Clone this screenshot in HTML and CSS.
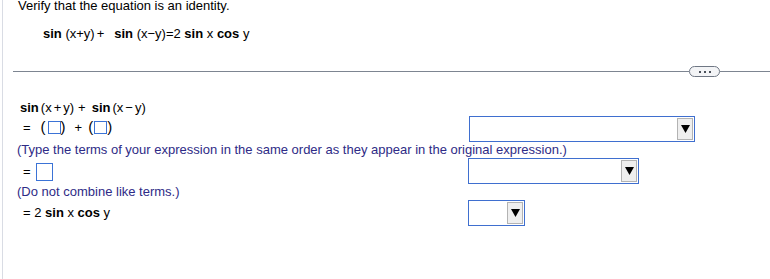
FILE: index.html
```html
<!DOCTYPE html>
<html lang="en">
<head>
<meta charset="utf-8">
<title>Verify identity</title>
<link rel="stylesheet" href="styles.css">
</head>
<body>
<div class="page">
  <p class="prompt">Verify that the equation is an identity.</p>
  <p class="given"><b>sin</b> (x+y)<span class="op-wide">+</span><b>sin</b> (x−y)=2 <b>sin</b> x <b>cos</b> y</p>
  <div class="divider">
    <span class="rule rule-left"></span>
    <span class="more"><i></i><i></i><i></i></span>
    <span class="rule rule-right"></span>
  </div>
  <div class="work">
    <p class="expr"><b>sin</b><span class="sp"></span>(x<span class="op">+</span>y)<span class="op2">+</span><b>sin</b><span class="sp"></span>(x<span class="op">−</span>y)</p>
    <div class="row row-1">
      <div class="math">=<span class="paren p-open">(</span><span class="box box-sm"></span><span class="paren">)</span><span class="plus">+</span><span class="paren p-open2">(</span><span class="box box-sm"></span><span class="paren">)</span></div>
      <div class="select w-lg"><span class="arrow"><svg width="9" height="8" viewBox="0 0 9 8"><polygon points="0,0 9,0 4.5,8" fill="#000"/></svg></span></div>
    </div>
    <p class="note">(Type the terms of your expression in the same order as they appear in the original expression.)</p>
    <div class="row row-2">
      <div class="math">=<span class="box box-md"></span></div>
      <div class="select w-md"><span class="arrow"><svg width="9" height="8" viewBox="0 0 9 8"><polygon points="0,0 9,0 4.5,8" fill="#000"/></svg></span></div>
    </div>
    <p class="note">(Do not combine like terms.)</p>
    <div class="row row-3">
      <div class="math">= 2 <b>sin</b> x <b>cos</b> y</div>
      <div class="select w-sm"><span class="arrow"><svg width="9" height="8" viewBox="0 0 9 8"><polygon points="0,0 9,0 4.5,8" fill="#000"/></svg></span></div>
    </div>
  </div>
</div>
</body>
</html>
```
FILE: styles.css
```css
html, body {
  margin: 0;
  padding: 0;
  background: #fff;
}
body {
  font-family: "Liberation Sans", Arial, sans-serif;
  font-size: 13px;
  line-height: 15px;
  color: #000;
}
p { margin: 0; }
b { font-weight: bold; }

.page {
  margin-left: 2px;
  border-left: 1px solid #d9dce4;
  min-height: 279px;
  overflow: hidden;
}

.prompt {
  line-height: 12px;
  padding-left: 15px;
}

.given {
  margin-top: 14px;
  padding-left: 40px;
  white-space: nowrap;
}
.op-wide {
  margin: 0 10px 0 2px;
}

.divider {
  display: flex;
  align-items: center;
  margin-top: 25px;
  padding-left: 10px;
  height: 11px;
}
.rule {
  height: 1px;
  background: #7d8591;
}
.rule-left { width: 676px; }
.rule-right { flex: 1; }
.more {
  width: 31px;
  height: 11px;
  box-sizing: border-box;
  border: 1px solid #6f7784;
  border-radius: 6px;
  background: #f3f4f6;
  display: flex;
  align-items: center;
  justify-content: center;
  gap: 3px;
}
.more i {
  display: block;
  width: 2px;
  height: 2px;
  background: #4a505a;
}

.work {
  margin-top: 23px;
  padding-left: 14px;
}
.expr {
  padding-left: 3px;
  white-space: nowrap;
}
.sp { display: inline-block; width: 2px; }
.op { margin: 0 2px; }
.op2 { margin: 0 6px 0 4px; }

.row {
  display: grid;
  grid-template-columns: 451px auto;
  align-items: start;
  height: 26px;
  margin-top: 1px;
}
.math {
  padding-left: 6px;
  white-space: nowrap;
}
.row-1 .math { padding-top: 3px; }
.row-2 .math { padding-top: 5px; }
.row-3 .math { padding-top: 5px; }

.paren {
  font-size: 15px;
}
.p-open { margin-left: 10px; margin-right: 2px; }
.p-open2 { margin-right: 1px; }
.plus { margin: 0 6px 0 9px; }

.box {
  display: inline-block;
  box-sizing: border-box;
  border: 1px solid #3b73d6;
  background: #fff;
}
.box-sm {
  width: 13px;
  height: 13px;
  vertical-align: -2px;
}
.box-md {
  width: 17px;
  height: 18px;
  margin-left: 5px;
  vertical-align: -5px;
}

.note {
  color: #2e2b86;
  white-space: nowrap;
}

.select {
  box-sizing: border-box;
  height: 26px;
  padding: 1px;
  border: 1px solid #3f6fcf;
  background: #fff;
  display: flex;
  justify-content: flex-end;
}
.w-lg { width: 226px; margin-left: 1px; }
.w-md { width: 171px; }
.w-sm { width: 57px; }
.arrow {
  box-sizing: border-box;
  width: 16px;
  height: 22px;
  border: 1px solid #b3b3b3;
  background: #efefef;
  display: flex;
  align-items: center;
  justify-content: center;
}
.arrow svg { display: block; }
```
